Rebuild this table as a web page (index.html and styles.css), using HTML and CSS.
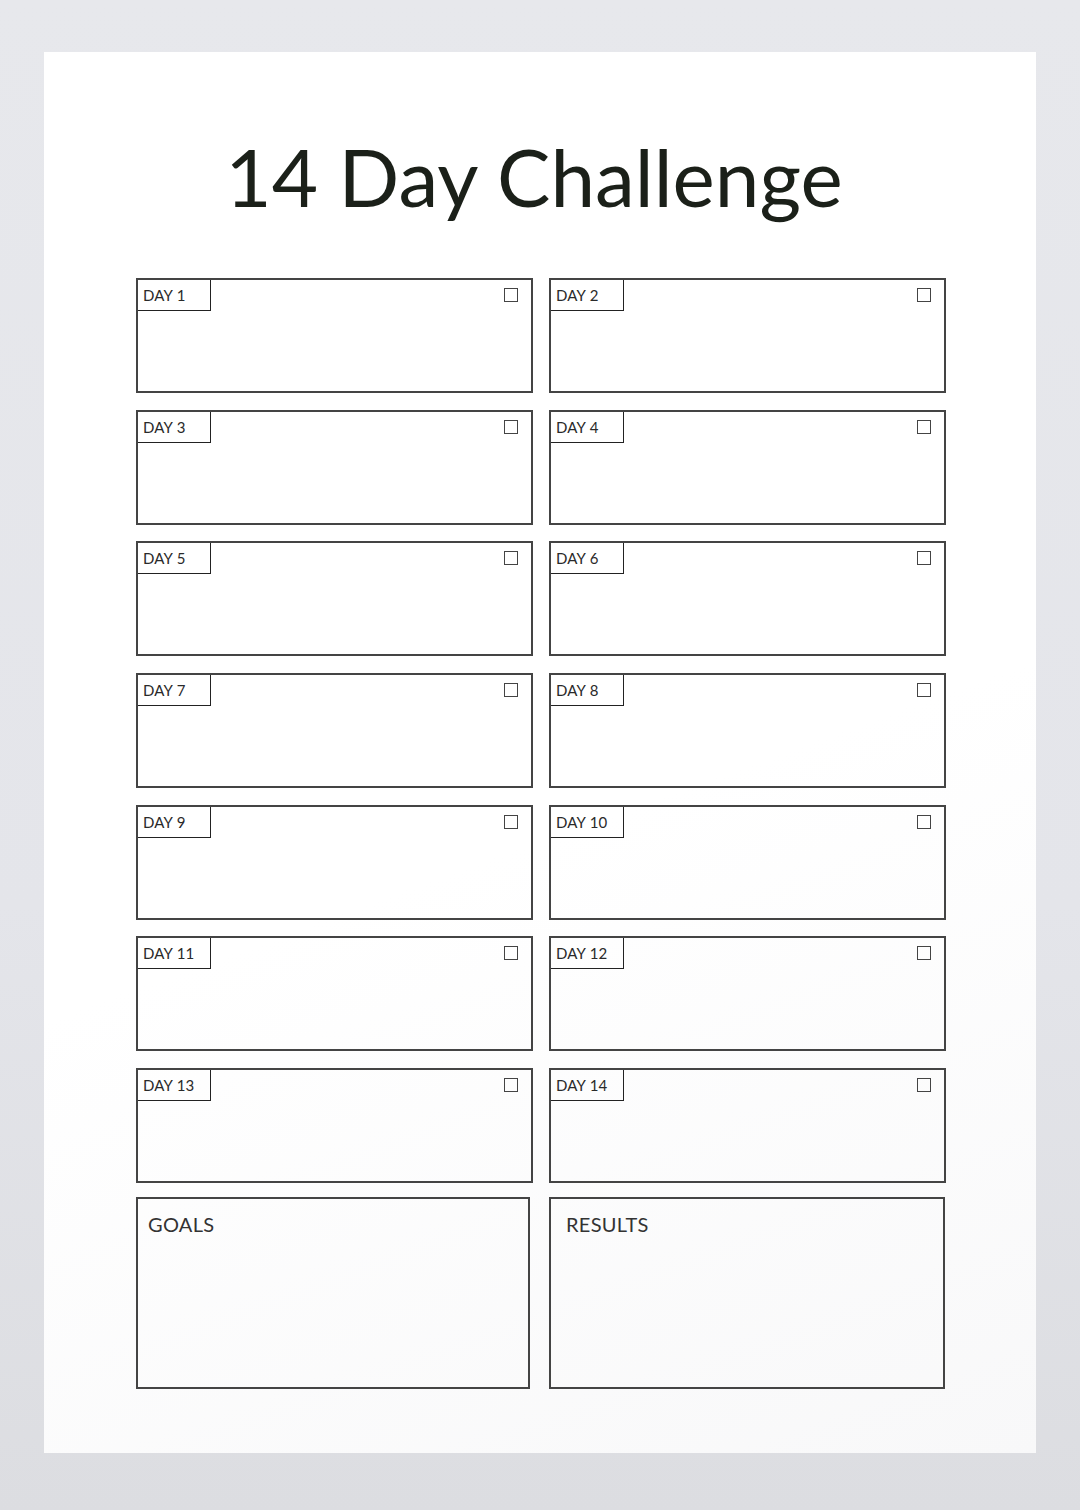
FILE: index.html
```html
<!DOCTYPE html>
<html>
<head>
<meta charset="utf-8">
<link rel="stylesheet" href="styles.css">
</head>
<body>
<div class="sheet">
  <h1 class="title">14 Day Challenge</h1>
  <div class="days">
    <div class="day"><span class="tag">DAY 1</span><span class="check"></span></div>
    <div class="day"><span class="tag">DAY 2</span><span class="check"></span></div>
    <div class="day"><span class="tag">DAY 3</span><span class="check"></span></div>
    <div class="day"><span class="tag">DAY 4</span><span class="check"></span></div>
    <div class="day"><span class="tag">DAY 5</span><span class="check"></span></div>
    <div class="day"><span class="tag">DAY 6</span><span class="check"></span></div>
    <div class="day"><span class="tag">DAY 7</span><span class="check"></span></div>
    <div class="day"><span class="tag">DAY 8</span><span class="check"></span></div>
    <div class="day"><span class="tag">DAY 9</span><span class="check"></span></div>
    <div class="day"><span class="tag">DAY 10</span><span class="check"></span></div>
    <div class="day"><span class="tag">DAY 11</span><span class="check"></span></div>
    <div class="day"><span class="tag">DAY 12</span><span class="check"></span></div>
    <div class="day"><span class="tag">DAY 13</span><span class="check"></span></div>
    <div class="day"><span class="tag">DAY 14</span><span class="check"></span></div>
  </div>
  <div class="notes">
    <div class="note goals">GOALS</div>
    <div class="note results">RESULTS</div>
  </div>
</div>
</body>
</html>
```

FILE: styles.css
```css
html, body {
  margin: 0;
  padding: 0;
}
body {
  width: 1080px;
  height: 1510px;
  background: linear-gradient(180deg, #e7e8ec 0%, #e4e5ea 60%, #dcdde1 100%);
  font-family: "Lato", "Liberation Sans", sans-serif;
  overflow: hidden;
  padding-top: 52px;
  box-sizing: border-box;
}
.sheet {
  margin-left: 44px;
  width: 992px;
  height: 1401px;
  box-sizing: border-box;
  background: linear-gradient(160deg, #ffffff 55%, #f8f8f9 100%);
  padding: 0 90px 0 92px;
  display: flex;
  flex-direction: column;
}
.title {
  margin: 0;
  padding-top: 84px;
  padding-right: 14px;
  height: 80px;
  box-sizing: content-box;
  font-weight: 400;
  font-size: 80px;
  line-height: 80px;
  text-align: center;
  color: #1b2019;
  letter-spacing: 0;
  margin-bottom: 62px;
}
.days {
  display: grid;
  grid-template-columns: 397px 397px;
  column-gap: 16px;
  row-gap: 16.67px;
  grid-auto-rows: 115px;
}
.day {
  position: relative;
  border: 2px solid #444;
  box-sizing: border-box;
  display: flex;
  justify-content: space-between;
  align-items: flex-start;
}
.tag {
  display: block;
  width: 73px;
  height: 31px;
  box-sizing: border-box;
  border-right: 1px solid #222;
  border-bottom: 1px solid #222;
  font-size: 15px;
  line-height: 30px;
  padding-left: 5px;
  color: #2a2a2a;
  letter-spacing: 0.2px;
}
.check {
  display: block;
  width: 14px;
  height: 14px;
  box-sizing: border-box;
  border: 1px solid #444;
  margin-top: 8px;
  margin-right: 13px;
}
.notes {
  margin-top: 14px;
  display: grid;
  grid-template-columns: 394px 396px;
  column-gap: 19px;
}
.note {
  height: 192px;
  box-sizing: border-box;
  border: 2px solid #444;
  font-size: 20px;
  color: #333;
  padding-top: 13px;
  letter-spacing: 0.3px;
}
.goals { padding-left: 10px; }
.results { padding-left: 15px; }
```
